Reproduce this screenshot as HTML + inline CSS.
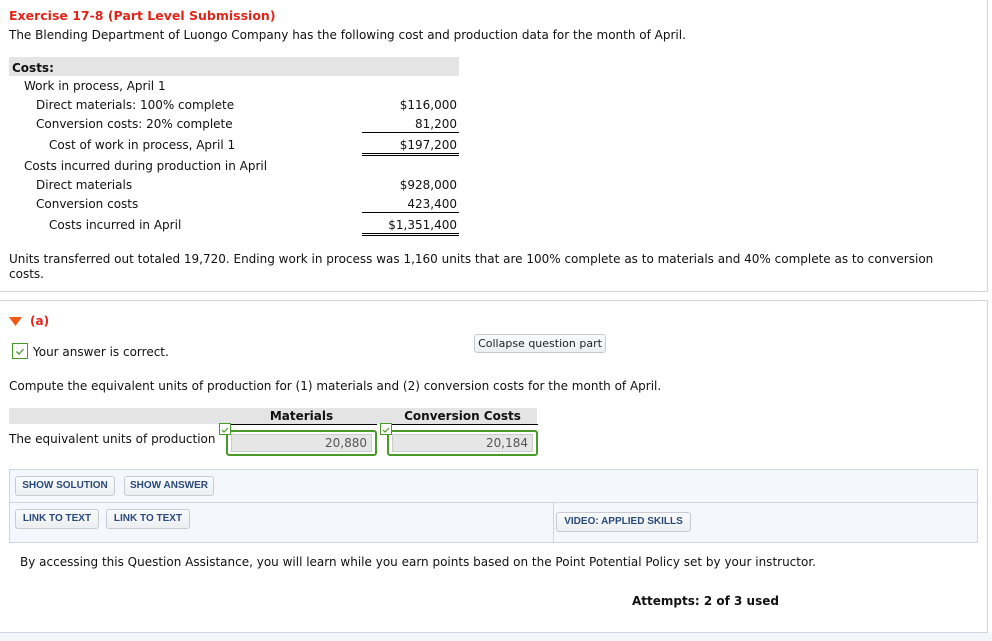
<!DOCTYPE html>
<html><head><style>
body{margin:0;width:992px;height:641px;background:#fff;font-family:"DejaVu Sans",Verdana,sans-serif;font-size:12px;color:#111;position:relative;overflow:hidden}
.a{position:absolute;white-space:nowrap;line-height:14px;margin-top:1px}
.r{text-align:right}
.b{font-weight:bold}
.btn{position:absolute;border:1px solid #c8ccd2;border-radius:3px;background:linear-gradient(#fafbfc,#eceef1);font-family:"Liberation Sans",Arial,sans-serif;font-weight:bold;font-size:10px;color:#2a4a7a;box-sizing:border-box;text-align:center}
.chk{position:absolute;border:1px solid #4a9a2a;background:#fff;box-sizing:border-box}
</style></head><body>
<div style="position:absolute;left:0;top:0;width:987px;height:291px;border-right:1px solid #cfd6e0;border-bottom:1px solid #cfd6e0"></div>
<div class="a b" style="left:9px;top:8px;color:#e0251b;font-size:12.5px">Exercise 17-8 (Part Level Submission)</div>
<div class="a" style="left:9px;top:27px">The Blending Department of Luongo Company has the following cost and production data for the month of April.</div>
<div style="position:absolute;left:9px;top:57px;width:450px;height:19px;background:#e4e4e4"></div>
<div class="a b" style="left:12px;top:60px">Costs:</div>
<div class="a" style="left:24px;top:78px">Work in process, April 1</div>
<div class="a" style="left:36px;top:97px">Direct materials: 100% complete</div>
<div class="a" style="left:36px;top:116px">Conversion costs: 20% complete</div>
<div class="a" style="left:49px;top:137px">Cost of work in process, April 1</div>
<div class="a" style="left:24px;top:158px">Costs incurred during production in April</div>
<div class="a" style="left:36px;top:177px">Direct materials</div>
<div class="a" style="left:36px;top:196px">Conversion costs</div>
<div class="a" style="left:49px;top:217px">Costs incurred in April</div>
<div class="a r" style="left:340px;width:117px;top:97px">$116,000</div>
<div class="a r" style="left:340px;width:117px;top:116px">81,200</div>
<div class="a r" style="left:340px;width:117px;top:137px">$197,200</div>
<div class="a r" style="left:340px;width:117px;top:177px">$928,000</div>
<div class="a r" style="left:340px;width:117px;top:196px">423,400</div>
<div class="a r" style="left:340px;width:117px;top:217px">$1,351,400</div>
<div style="position:absolute;left:362px;top:132px;width:97px;border-top:1px solid #000"></div>
<div style="position:absolute;left:362px;top:153px;width:97px;height:1px;border-top:1px solid #000;border-bottom:1px solid #000"></div>
<div style="position:absolute;left:362px;top:212px;width:97px;border-top:1px solid #000"></div>
<div style="position:absolute;left:362px;top:233px;width:97px;height:1px;border-top:1px solid #000;border-bottom:1px solid #000"></div>
<div class="a" style="left:9px;top:251px">Units transferred out totaled 19,720. Ending work in process was 1,160 units that are 100% complete as to materials and 40% complete as to conversion</div>
<div class="a" style="left:9px;top:266px">costs.</div>

<div style="position:absolute;left:0;top:300px;width:987px;height:331px;border-top:1px solid #cfd6e0;border-right:1px solid #cfd6e0;border-bottom:1px solid #cfd6e0"></div>
<div style="position:absolute;left:0;top:633px;width:992px;height:8px;background:#f4f6f9"></div>
<svg style="position:absolute;left:9px;top:317px" width="14" height="10"><polygon points="0,0 13,0 6.5,9" fill="#f05a14"/></svg>
<div class="a b" style="left:30px;top:313px;color:#e0251b">(a)</div>
<div class="chk" style="left:12px;top:343px;width:16px;height:16px"><svg width="14" height="14"><path d="M3.5 7.5l2.5 2.5 4.5-5" stroke="#4a9a2a" stroke-width="1.3" fill="none"/></svg></div>
<div class="a" style="left:33px;top:344px">Your answer is correct.</div>
<div class="btn" style="left:474px;top:334px;width:132px;height:19px;font-family:'DejaVu Sans',sans-serif;font-weight:normal;font-size:11px;color:#222;line-height:17px">Collapse question part</div>
<div class="a" style="left:9px;top:378px">Compute the equivalent units of production for (1) materials and (2) conversion costs for the month of April.</div>
<div style="position:absolute;left:9px;top:408px;width:528px;height:16px;background:#e4e4e4"></div>
<div class="a b" style="left:226px;width:151px;top:408px;text-align:center">Materials</div>
<div class="a b" style="left:387px;width:151px;top:408px;text-align:center">Conversion Costs</div>
<div style="position:absolute;left:226px;top:424px;width:151px;border-top:1px solid #000"></div>
<div style="position:absolute;left:387px;top:424px;width:151px;border-top:1px solid #000"></div>
<div class="a" style="left:9px;top:431px">The equivalent units of production</div>
<div style="position:absolute;left:226px;top:430px;width:151px;height:26px;border:2px solid #4a9a2a;border-radius:3px;box-sizing:border-box;background:#fff"><div style="position:absolute;left:3px;top:2px;right:3px;bottom:2px;background:#e6e6e6;border:1px solid #ccc;text-align:right;color:#555;line-height:16px;padding-right:4px">20,880</div></div>
<div style="position:absolute;left:387px;top:430px;width:151px;height:26px;border:2px solid #4a9a2a;border-radius:3px;box-sizing:border-box;background:#fff"><div style="position:absolute;left:3px;top:2px;right:3px;bottom:2px;background:#e6e6e6;border:1px solid #ccc;text-align:right;color:#555;line-height:16px;padding-right:4px">20,184</div></div>
<div class="chk" style="left:219px;top:423px;width:12px;height:12px"><svg width="10" height="10"><path d="M2 5l2 2 4-4" stroke="#4a9a2a" stroke-width="1.2" fill="none"/></svg></div>
<div class="chk" style="left:380px;top:423px;width:12px;height:12px"><svg width="10" height="10"><path d="M2 5l2 2 4-4" stroke="#4a9a2a" stroke-width="1.2" fill="none"/></svg></div>

<div style="position:absolute;left:9px;top:469px;width:969px;height:74px;background:#f4f7fb;border:1px solid #cfd6e0;box-sizing:border-box"></div>
<div style="position:absolute;left:9px;top:502px;width:969px;border-top:1px solid #cfd6e0"></div>
<div style="position:absolute;left:553px;top:502px;height:41px;border-left:1px solid #cfd6e0"></div>
<div class="btn" style="left:15px;top:476px;width:100px;height:20px;line-height:18px">SHOW SOLUTION</div>
<div class="btn" style="left:124px;top:476px;width:90px;height:20px;line-height:18px">SHOW ANSWER</div>
<div class="btn" style="left:15px;top:509px;width:84px;height:20px;line-height:18px">LINK TO TEXT</div>
<div class="btn" style="left:106px;top:509px;width:84px;height:20px;line-height:18px">LINK TO TEXT</div>
<div class="btn" style="left:556px;top:512px;width:135px;height:20px;line-height:18px">VIDEO: APPLIED SKILLS</div>
<div class="a" style="left:20px;top:554px">By accessing this Question Assistance, you will learn while you earn points based on the Point Potential Policy set by your instructor.</div>
<div class="a b" style="left:632px;top:593px">Attempts: 2 of 3 used</div>
</body></html>
